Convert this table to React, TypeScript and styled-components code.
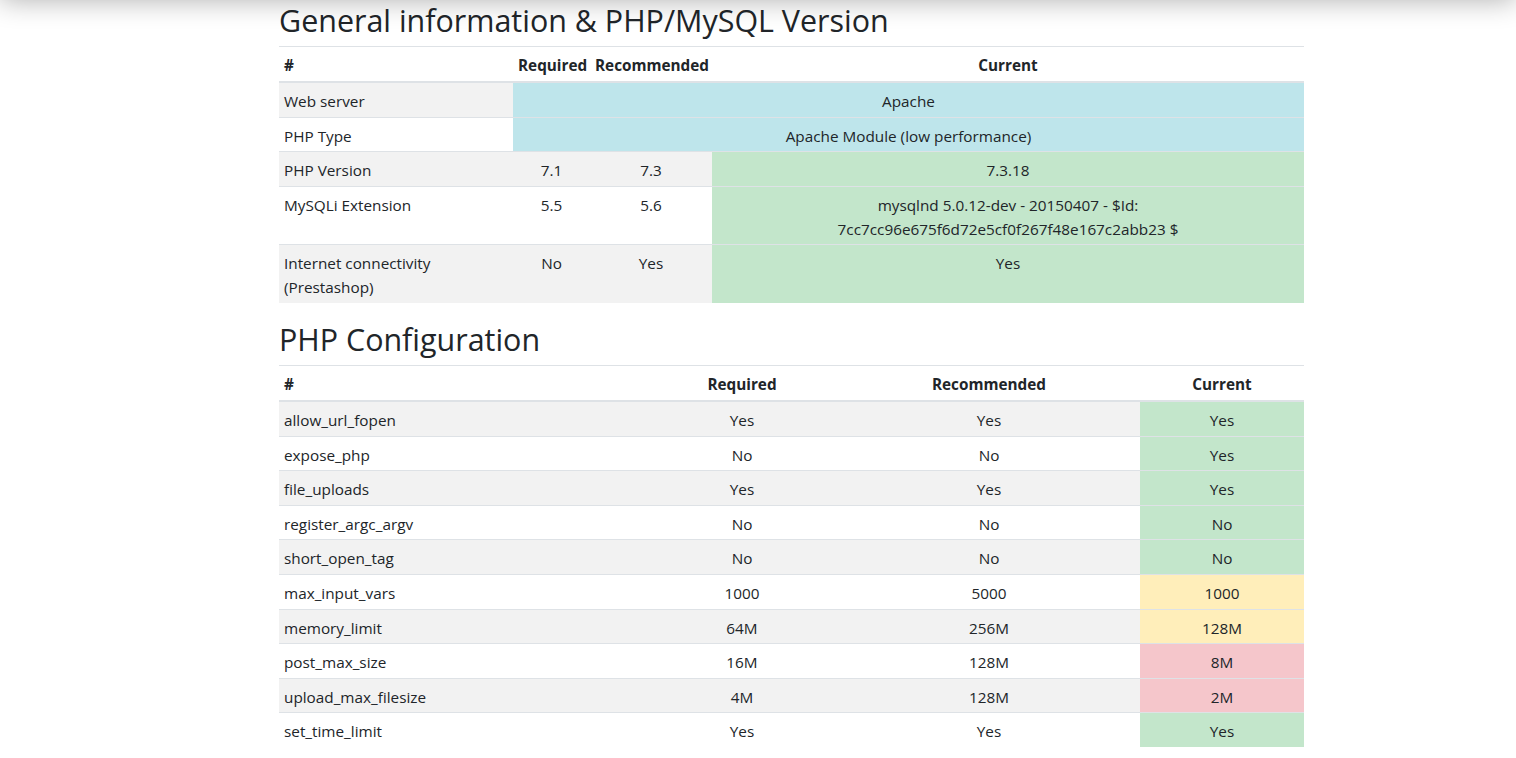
import React from "react";
import styled, { createGlobalStyle } from "styled-components";

const Global = createGlobalStyle`
  html, body { margin: 0; padding: 0; background: #fff; }
  body {
    font-family: "Open Sans", "Noto Sans", "Liberation Sans", sans-serif;
    font-size: 15.3px;
    line-height: 24px;
    color: #212529;
  }
  * { box-sizing: border-box; }
`;

const TopShadow = styled.div`
  position: fixed;
  top: -40px;
  left: 0;
  right: 0;
  height: 40px;
  box-shadow: 0 0 28px rgba(0, 0, 0, 0.32);
  background: #fff;
`;

const Page = styled.main`
  width: 1025px;
  margin-left: 279px;
`;

const Title = styled.h2`
  margin: 0 0 8px;
  padding-top: 2px;
  font-size: 30.45px;
  font-weight: 400;
  line-height: 36px;
  color: #212529;
`;

const Table = styled.table`
  width: 100%;
  table-layout: fixed;
  border-collapse: collapse;
  margin-bottom: 16px;
`;

const Th = styled.th<{ $align?: string }>`
  padding: 6.4px 5px 3.6px;
  text-align: ${(p) => p.$align || "center"};
  font-weight: 700;
  border-top: 1px solid #dee2e6;
  border-bottom: 2px solid #dee2e6;
  vertical-align: bottom;
  white-space: nowrap;
`;

const Row = styled.tr<{ $striped: boolean }>`
  background: ${(p) => (p.$striped ? "#f2f2f2" : "transparent")};
`;

const tone: Record<string, string> = {
  info: "#bee5eb",
  success: "#c3e6cb",
  warning: "#ffeeba",
  danger: "#f5c6cb",
};

const Td = styled.td<{ $align?: string; $tone?: string }>`
  padding: 6px 5px 3.6px;
  border-top: 1px solid #dee2e6;
  vertical-align: top;
  text-align: ${(p) => p.$align || "center"};
  background: ${(p) => (p.$tone ? tone[p.$tone] : "transparent")};
`;

type GenRow = {
  name: React.ReactNode;
  req?: string;
  rec?: string;
  cur: React.ReactNode;
  tone: string;
  span?: boolean;
};

const general: GenRow[] = [
  { name: "Web server", cur: "Apache", tone: "info", span: true },
  { name: "PHP Type", cur: "Apache Module (low performance)", tone: "info", span: true },
  { name: "PHP Version", req: "7.1", rec: "7.3", cur: "7.3.18", tone: "success" },
  {
    name: "MySQLi Extension",
    req: "5.5",
    rec: "5.6",
    cur: "mysqlnd 5.0.12-dev - 20150407 - $Id: 7cc7cc96e675f6d72e5cf0f267f48e167c2abb23 $",
    tone: "success",
  },
  { name: "Internet connectivity (Prestashop)", req: "No", rec: "Yes", cur: "Yes", tone: "success" },
];

const config: [string, string, string, string, string][] = [
  ["allow_url_fopen", "Yes", "Yes", "Yes", "success"],
  ["expose_php", "No", "No", "Yes", "success"],
  ["file_uploads", "Yes", "Yes", "Yes", "success"],
  ["register_argc_argv", "No", "No", "No", "success"],
  ["short_open_tag", "No", "No", "No", "success"],
  ["max_input_vars", "1000", "5000", "1000", "warning"],
  ["memory_limit", "64M", "256M", "128M", "warning"],
  ["post_max_size", "16M", "128M", "8M", "danger"],
  ["upload_max_filesize", "4M", "128M", "2M", "danger"],
  ["set_time_limit", "Yes", "Yes", "Yes", "success"],
];

export default function App() {
  return (
    <>
      <Global />
      <TopShadow />
      <Page>
        <Title>General information &amp; PHP/MySQL Version</Title>
        <Table>
          <colgroup>
            <col style={{ width: 234 }} />
            <col style={{ width: 77 }} />
            <col style={{ width: 122 }} />
            <col style={{ width: 592 }} />
          </colgroup>
          <thead>
            <tr>
              <Th $align="left">#</Th>
              <Th>Required</Th>
              <Th>Recommended</Th>
              <Th>Current</Th>
            </tr>
          </thead>
          <tbody>
            {general.map((r, i) => (
              <Row key={i} $striped={i % 2 === 0}>
                <Td $align="left">{r.name}</Td>
                {r.span ? (
                  <Td colSpan={3} $tone={r.tone}>
                    {r.cur}
                  </Td>
                ) : (
                  <>
                    <Td>{r.req}</Td>
                    <Td>{r.rec}</Td>
                    <Td $tone={r.tone}>{r.cur}</Td>
                  </>
                )}
              </Row>
            ))}
          </tbody>
        </Table>

        <Title>PHP Configuration</Title>
        <Table>
          <colgroup>
            <col style={{ width: 367 }} />
            <col style={{ width: 192 }} />
            <col style={{ width: 302 }} />
            <col style={{ width: 164 }} />
          </colgroup>
          <thead>
            <tr>
              <Th $align="left">#</Th>
              <Th>Required</Th>
              <Th>Recommended</Th>
              <Th>Current</Th>
            </tr>
          </thead>
          <tbody>
            {config.map(([name, req, rec, cur, t], i) => (
              <Row key={name} $striped={i % 2 === 0}>
                <Td $align="left">{name}</Td>
                <Td>{req}</Td>
                <Td>{rec}</Td>
                <Td $tone={t}>{cur}</Td>
              </Row>
            ))}
          </tbody>
        </Table>
      </Page>
    </>
  );
}
